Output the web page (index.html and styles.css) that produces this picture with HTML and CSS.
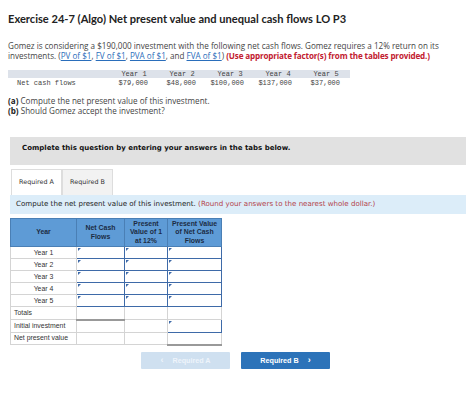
FILE: index.html
```html
<!DOCTYPE html>
<html lang="en">
<head>
  <meta charset="UTF-8" />
  <title>Exercise 24-7</title>
  <link rel="stylesheet" href="styles.css">
</head>
<body>

<h2 class="title">Exercise 24-7 (Algo) Net present value and unequal cash flows LO P3</h2>

<p class="intro">
  Gomez is considering a $190,000 investment with the following net cash flows. Gomez requires a 12% return on its<br>
  investments. (<a href="#">PV of $1</a>, <a href="#">FV of $1</a>, <a href="#">PVA of $1</a>, and <a href="#">FVA of $1</a>)
  <span class="hint">(Use appropriate factor(s) from the tables provided.)</span>
</p>

<table class="flows">
  <thead>
    <tr><th></th><th>Year 1</th><th>Year 2</th><th>Year 3</th><th>Year 4</th><th>Year 5</th></tr>
  </thead>
  <tbody>
    <tr><td class="lbl">Net cash flows</td><td>$79,000</td><td>$48,000</td><td>$100,000</td><td>$137,000</td><td>$37,000</td></tr>
  </tbody>
</table>

<p class="parts">
  <b>(a)</b> Compute the net present value of this investment.<br>
  <b>(b)</b> Should Gomez accept the investment?
</p>

<div class="notice">Complete this question by entering your answers in the tabs below.</div>

<div class="tabs">
  <div class="tab active">Required A</div>
  <div class="tab">Required B</div>
</div>

<div class="instr">Compute the net present value of this investment. <span class="round">(Round your answers to the nearest whole dollar.)</span></div>

<table class="npv">
  <thead>
    <tr>
      <th class="c-year">Year</th>
      <th class="c-flow">Net Cash<br>Flows</th>
      <th class="c-fac">Present<br>Value of 1<br>at 12%</th>
      <th class="c-pv">Present Value<br>of Net Cash<br>Flows</th>
    </tr>
  </thead>
  <tbody>
    <tr><td class="yr">Year 1</td><td class="inp"></td><td class="inp"></td><td class="inp"></td></tr>
    <tr><td class="yr">Year 2</td><td class="inp"></td><td class="inp"></td><td class="inp"></td></tr>
    <tr><td class="yr">Year 3</td><td class="inp"></td><td class="inp"></td><td class="inp"></td></tr>
    <tr><td class="yr">Year 4</td><td class="inp"></td><td class="inp"></td><td class="inp"></td></tr>
    <tr><td class="yr">Year 5</td><td class="inp"></td><td class="inp"></td><td class="inp"></td></tr>
    <tr><td>Totals</td><td class="sum"></td><td></td><td></td></tr>
    <tr><td>Initial investment</td><td></td><td></td><td class="inp"></td></tr>
    <tr><td>Net present value</td><td></td><td></td><td class="sum"></td></tr>
  </tbody>
</table>

<div class="nav">
  <button class="btn prev"><span class="chev left">&lsaquo;</span>Required A</button>
  <button class="btn next">Required B<span class="chev right">&rsaquo;</span></button>
</div>

</body>
</html>
```

FILE: styles.css
```css
body { margin: 0; padding: 0 8px; font-family: "Open Sans", Arial, sans-serif; color: #333; background: #fff; }

.title { margin: 11px 0 0; font-family: Lato, "Open Sans", sans-serif; font-size: 11.1px; line-height: 16px; font-weight: 700; color: #222; white-space: nowrap; }

.intro { margin: 14px 0 0; font-size: 8.1px; line-height: 10px; color: #444; white-space: nowrap; }
.intro a { color: #2a6ebb; }
.hint { color: #c2202f; font-weight: 700; letter-spacing: -0.15px; }

/* cash flow table, printed in a typewriter face */
.flows { margin-top: 9px; border-collapse: collapse; table-layout: fixed; width: 342px; font-family: "Liberation Mono", "Courier New", monospace; font-size: 7px; color: #444; }
.flows th { background: #dde2ea; font-weight: normal; height: 8px; padding: 0; line-height: 8px; text-align: center; width: 48px; }
.flows th:first-child { width: 102px; }
.flows td { padding: 0 10px 0 0; text-align: right; height: 10px; line-height: 10px; }
.flows td.lbl { text-align: left; padding-left: 9px; }

.parts { margin: 8px 0 0; font-size: 8.1px; line-height: 10px; color: #444; }
.parts b { color: #222; }

.notice { margin: 21px 0 0 2px; width: 456px; height: 28px; padding-left: 12px; box-sizing: border-box; background: #e1e1e1; font-family: "DejaVu Sans", Verdana, sans-serif; font-weight: bold; font-size: 7px; line-height: 23px; color: #111; white-space: nowrap; }

.tabs { display: flex; margin: 4px 0 0 3px; height: 26px; }
.tab { width: 51px; height: 26px; box-sizing: border-box; border: 1px solid #ddd; border-bottom: none; background: #f2f2f2; font-family: "DejaVu Sans", Verdana, sans-serif; font-size: 6.4px; line-height: 25px; text-align: center; color: #333; }
.tab.active { background: #fff; }

.instr { margin-left: 2px; width: 456px; height: 19px; padding-left: 6px; box-sizing: border-box; background: #dcedf9; font-family: "DejaVu Sans", Verdana, sans-serif; font-size: 7.1px; line-height: 17px; color: #222; white-space: nowrap; }
.round { color: #b3434b; }

/* answer grid */
.npv { margin: 4px 0 0 2px; border-collapse: collapse; table-layout: fixed; width: 208px; font-family: "Liberation Sans", Arial, sans-serif; font-size: 6.9px; color: #333; }
.npv th { background: #5e9bd6; color: #1c2c44; font-weight: bold; border: 1px solid #4a7fb5; line-height: 8.3px; padding: 0; height: 27px; }
.npv th.c-year { width: 65px; }
.npv th.c-flow { width: 47px; }
.npv th.c-fac { width: 42px; }
.npv th.c-pv { width: 53px; }
.npv td { border: 1px solid #d4d4d4; height: 11.1px; padding: 0 3px; line-height: 10px; }
.npv td.yr { text-align: center; }
.npv td.inp { border: 1.5px solid #3e6aa8; position: relative; }
.npv td.inp::before { content: ""; position: absolute; left: 1px; top: 1px; border-left: 3px solid #3e6aa8; border-bottom: 3px solid transparent; }
.npv td.sum { border-bottom: 2px solid #999; }

.nav { display: flex; gap: 11px; margin: 6px 0 0 133px; }
.btn { width: 89px; height: 17px; border: none; border-radius: 1px; font-family: "Liberation Sans", Arial, sans-serif; font-weight: bold; font-size: 7.2px; color: #fff; padding: 0; }
.btn .chev { font-size: 9px; }
.btn .chev.left { margin-right: 9px; }
.btn .chev.right { margin-left: 9px; }
.btn.prev { background: #cfe0f0; color: #eef4fb; }
.btn.next { background: #2c73b9; }
```
